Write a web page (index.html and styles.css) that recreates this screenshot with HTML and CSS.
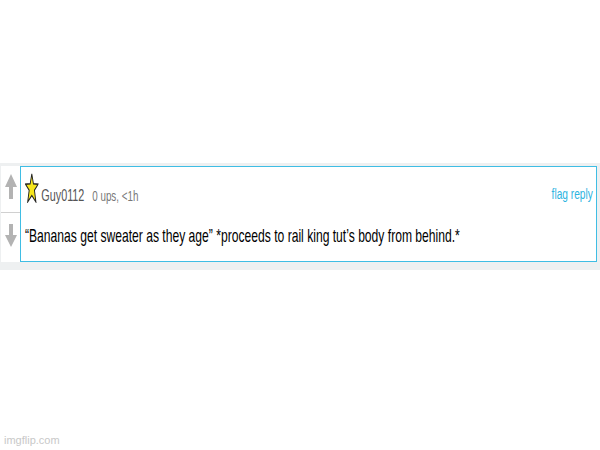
FILE: index.html
```html
<!DOCTYPE html>
<html lang="en">
<head>
    <meta charset="UTF-8">
    <title>Comment</title>
    <link rel="stylesheet" href="styles.css">
</head>
<body>

<div class="comment-wrap">
    <div class="vote-col">
        <div class="vote vote-up">
            <svg width="12" height="25" viewBox="0 0 12 25"><path d="M6 0 L12 13 L8 13 L8 25 L4 25 L4 13 L0 13 Z" fill="#b3b3b3"/></svg>
        </div>
        <div class="vote vote-down">
            <svg width="12" height="23" viewBox="0 0 12 23"><path d="M6 23 L12 11 L8 11 L8 0 L4 0 L4 11 L0 11 Z" fill="#b3b3b3"/></svg>
        </div>
    </div>
    <div class="comment">
        <div class="comment-inner">
            <div class="comment-head">
                <svg class="star" width="21" height="30" viewBox="0 0 21 30"><path d="M10.5 1 L13 10.8 L20.2 11.2 L14.5 17.2 L16.8 29 L10.5 22.6 L4.2 29 L6.5 17.2 L0.8 11.2 L8 10.8 Z" fill="#f6e61e" stroke="#222" stroke-width="1.4"/></svg>
                <span class="user">Guy0112</span>
                <span class="meta">0 ups, &lt;1h</span>
                <span class="links">flag reply</span>
            </div>
            <div class="comment-text">“Bananas get sweater as they age” *proceeds to rail king tut’s body from behind.*</div>
        </div>
    </div>
</div>

<div class="watermark">imgflip.com</div>

</body>
</html>
```

FILE: styles.css
```css
body {
    margin: 0;
    width: 600px;
    height: 450px;
    position: relative;
    background: #fff;
    font-family: "Liberation Sans", Arial, sans-serif;
    overflow: hidden;
}

.comment-wrap {
    display: flex;
    margin-top: 163px;
    background-color: #eef0f1;
    padding: 3px 3px 8px 1px;
}

.vote-col {
    width: 19px;
    display: flex;
    flex-direction: column;
    background: #fff;
}

.vote {
    flex: 1;
    display: flex;
    justify-content: center;
    align-items: flex-start;
}

.vote-up {
    padding-top: 8px;
}

.vote-down {
    padding-top: 11px;
    border-top: 1px solid #d0d0d0;
}

.comment {
    flex: 1;
    background: #fff;
    border: 1px solid #3fbde4;
    min-width: 0;
    overflow: hidden;
}

/* the whole comment is drawn narrow, like in the screenshot */
.comment-inner {
    width: 878px;
    transform: scaleX(0.655);
    transform-origin: left top;
}

.comment-head {
    display: flex;
    align-items: flex-end;
    height: 38px;
    padding-bottom: 8px;
    padding-left: 6px;
    white-space: nowrap;
}

.star {
    flex: none;
    margin-bottom: 2px;
}

.user {
    font-size: 16.5px;
    color: #555;
    margin-left: 4px;
}

.meta {
    font-size: 15px;
    color: #777;
    margin-left: 12px;
    margin-bottom: 1px;
}

.links {
    margin-left: auto;
    margin-right: 5px;
    margin-bottom: 2px;
    font-size: 15.5px;
    color: #2eb4df;
}

.comment-text {
    height: 36px;
    padding-top: 12px;
    padding-left: 6px;
    font-size: 18.5px;
    color: #000;
    white-space: nowrap;
}

.watermark {
    position: absolute;
    left: 4px;
    top: 434px;
    font-size: 11px;
    color: #c8c8c8;
}
```
